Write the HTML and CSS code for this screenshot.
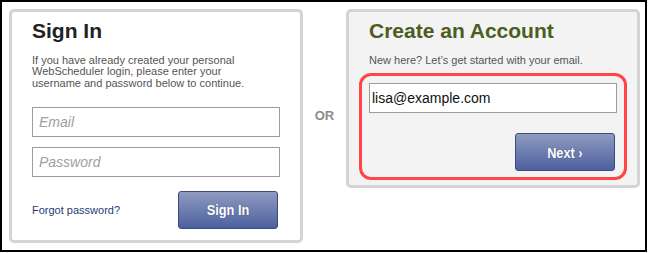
FILE: index.html
```html
<!DOCTYPE html>
<html>
<head>
<meta charset="utf-8">
<link rel="stylesheet" href="styles.css">
</head>
<body>
<div class="frame">
  <section class="card card-signin">
    <h2 class="title">Sign In</h2>
    <p class="intro intro-narrow">If you have already created your personal WebScheduler login, please enter your username and password below to continue.</p>
    <input class="field field-ph" type="text" placeholder="Email">
    <input class="field field-ph field-gap" type="password" placeholder="Password">
    <div class="actions">
      <a class="link" href="#">Forgot password?</a>
      <button class="btn" type="button"><span class="btn-label">Sign In</span></button>
    </div>
  </section>
  <div class="or">OR</div>
  <section class="card card-create">
    <h2 class="title title-green">Create an Account</h2>
    <p class="intro">New here? Let’s get started with your email.</p>
    <div class="highlight">
      <input class="field field-value" type="text" value="lisa@example.com">
      <div class="actions actions-end">
        <button class="btn" type="button"><span class="btn-label">Next ›</span></button>
      </div>
    </div>
  </section>
</div>
</body>
</html>
```
FILE: styles.css
```css
* { box-sizing: border-box; }
html, body { margin: 0; padding: 0; background: #fff; }
body { font-family: "Liberation Sans", Arial, sans-serif; }

.frame {
  width: 647px;
  height: 252px;
  border: 2px solid #000;
  padding: 7px 0 0 7px;
  display: flex;
  align-items: flex-start;
}

.card {
  width: 294px;
  border: 3px solid #d4d4d4;
  border-radius: 5px;
  padding: 7px 20px 11px;
  display: flex;
  flex-direction: column;
}
.card-signin { background: #fff; }
.card-create { background: #f3f3f3; padding-bottom: 5px; }

.title {
  margin: 0;
  font-size: 21px;
  line-height: 24px;
  font-weight: bold;
  color: #222;
}
.title-green { color: #4b5e1f; }

.intro {
  margin: 12px 0 0;
  font-size: 11px;
  line-height: 11.33px;
  color: #555;
}
.intro-narrow { width: 225px; }

.field {
  display: block;
  width: 248px;
  height: 30px;
  margin: 18px 0 0;
  border: 1px solid #9c9c9c;
  background: #fff;
  font-family: "Liberation Sans", Arial, sans-serif;
  font-size: 14px;
  color: #111;
  outline: none;
}
.field-ph { padding: 0 6px; }
.field-gap { margin-top: 10px; }
.field-ph::placeholder { color: #a0a0a0; font-style: italic; }
.field-value { margin: 0; padding: 0 2px; }

.actions {
  display: flex;
  align-items: center;
  justify-content: space-between;
  margin-top: 14px;
  padding-right: 2px;
}
.actions-end { justify-content: flex-end; margin-top: 20px; }

.link {
  font-size: 11px;
  color: #1f3b78;
  text-decoration: none;
}

.btn {
  width: 100px;
  height: 38px;
  border: 1px solid #3d4c7e;
  border-radius: 3px;
  background: linear-gradient(#8f9abf, #4d61a0);
  color: #fff;
  font-family: "Liberation Sans", Arial, sans-serif;
  font-weight: bold;
  font-size: 15px;
  text-shadow: 0 0 1px rgba(30, 40, 80, 0.6);
  padding: 0;
  cursor: pointer;
}
.btn-label {
  display: inline-block;
  transform: scaleX(0.85);
}

.or {
  width: 43px;
  margin-top: 99px;
  text-align: center;
  font-size: 13px;
  line-height: 15px;
  font-weight: bold;
  color: #8c8c8c;
}

.highlight {
  margin: 7px -10px 0;
  border: 3px solid #ff4646;
  border-radius: 12px;
  padding: 7px 7px 6px;
}
```
